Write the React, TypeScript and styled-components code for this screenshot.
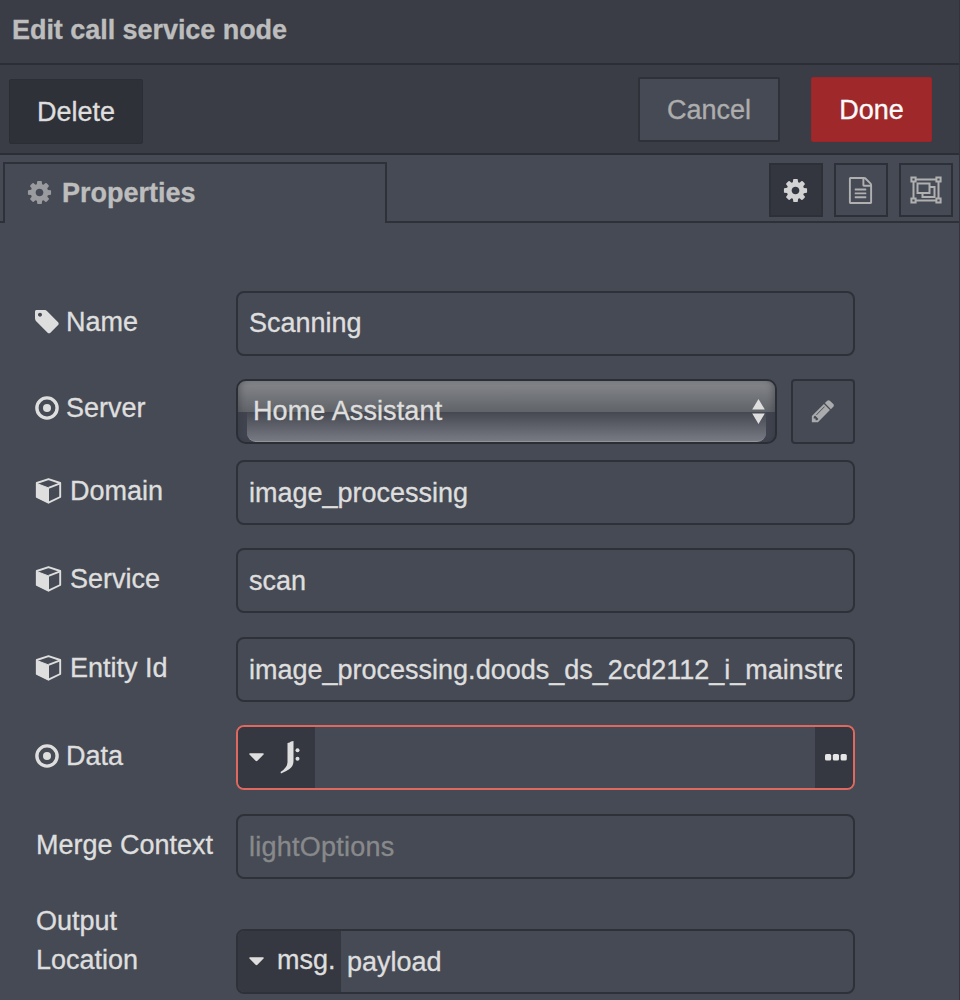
import React from 'react';
import styled, { createGlobalStyle, css } from 'styled-components';

const GlobalStyle = createGlobalStyle`
  *, *::before, *::after { box-sizing: border-box; }
  html, body { margin: 0; padding: 0; background: #464a54; }
  body { overflow: hidden; }
`;

const Tray = styled.main`
  display: flex;
  flex-direction: column;
  width: 960px;
  height: 1000px;
  overflow: hidden;
  background: #464a54;
  border-right: 1px solid #31343c;
  color: #dedede;
  font-family: 'Liberation Sans', Arial, sans-serif;
  font-size: 27px;
  -webkit-text-stroke: 0.35px currentColor;
`;

const TitleBar = styled.header`
  height: 65px;
  flex: none;
  padding-left: 12px;
  background: #3a3d46;
  border-bottom: 2px solid #2b2e35;
  color: #bdbdbd;
  font-weight: bold;
  letter-spacing: -0.05px;
  line-height: 60px;
`;

const Toolbar = styled.div`
  display: flex;
  align-items: flex-start;
  flex: none;
  height: 90px;
  padding: 12px 27px 0 9px;
  background: #3a3d46;
  border-bottom: 2px solid #2b2e35;
`;

const variants = {
  dark: css`
    width: 134px;
    margin: 2px auto 0 0;
    background: #2f3138;
    border: 1px solid #2b2e34;
    color: #dedede;
  `,
  plain: css`
    width: 142px;
    margin-right: 31px;
    background: #464a54;
    border: 2px solid #2e3138;
    color: #adadad;
  `,
  primary: css`
    width: 121px;
    background: #9f282b;
    border: 1px solid #9f2428;
    color: #fafafa;
  `,
};

const Button = styled.button<{ $variant: keyof typeof variants }>`
  display: flex;
  align-items: center;
  justify-content: center;
  height: 65px;
  padding: 2px 0 0;
  border-radius: 2px;
  font: inherit;
  ${({ $variant }) => variants[$variant]}
`;

const TabStrip = styled.div`
  display: flex;
  flex: none;
  height: 68px;
  padding-top: 7px;
`;

const StripEdge = styled.div`
  width: 3px;
  border-bottom: 2px solid #2e3138;
`;

const Tab = styled.div`
  display: flex;
  align-items: center;
  gap: 9px;
  width: 384px;
  padding: 0 0 1px 21px;
  border: 2px solid #2e3138;
  border-bottom: 0;
  color: #bdbdbd;
  font-weight: bold;

  svg { color: #9a9b9f; margin-bottom: 2px; }
`;

const TabTools = styled.div`
  display: flex;
  flex: 1;
  justify-content: flex-end;
  gap: 11px;
  padding: 1px 6px 0 0;
  border-bottom: 2px solid #2e3138;
`;

const TabTool = styled.button<{ $active?: boolean }>`
  display: flex;
  align-items: center;
  justify-content: center;
  width: 54px;
  height: 54px;
  padding: 0 2px 0 0;
  border: 2px solid #2d3037;
  background: ${({ $active }) => ($active ? '#33363e' : '#464a54')};
  color: ${({ $active }) => ($active ? '#d2d2d2' : '#b0b0b1')};

  &:last-child { padding-right: 0; }
`;

const Form = styled.form`
  display: flex;
  flex-direction: column;
  padding: 68px 104px 0 35px;
`;

const Row = styled.div<{ $gap?: number }>`
  display: flex;
  align-items: flex-end;
  margin-top: ${({ $gap = 24 }) => $gap}px;
`;

const Label = styled.label<{ $lift?: number; $gap?: number }>`
  display: flex;
  align-items: center;
  gap: ${({ $gap = 7 }) => $gap}px;
  flex: none;
  width: 201px;
  padding: 0 10px ${({ $lift = 14 }) => $lift}px 1px;
  line-height: 39px;

  svg { margin: 0 0 1px -1px; }
`;

const Field = styled.div<{ $error?: boolean; $muted?: boolean }>`
  display: flex;
  flex: 1;
  min-width: 0;
  height: 65px;
  border: 2px solid ${({ $error }) => ($error ? '#e0685f' : '#2e3138')};
  border-radius: 8px;
  overflow: hidden;
  color: ${({ $muted }) => ($muted ? '#88898b' : '#dedede')};
  letter-spacing: ${({ $muted }) => ($muted ? '0.25px' : 'normal')};
`;

const Value = styled.span<{ $inset?: number; $line?: number }>`
  flex: 1;
  min-width: 0;
  margin: 0 11px 0 ${({ $inset = 11 }) => $inset}px;
  overflow: hidden;
  line-height: ${({ $line = 62 }) => $line}px;
  white-space: nowrap;
`;

const TypeButton = styled.div<{ $width: number }>`
  display: flex;
  align-items: center;
  flex: none;
  width: ${({ $width }) => $width}px;
  padding-left: 11px;
  background: #353840;
`;

const TypeName = styled.span`
  margin-left: 13px;
  padding-bottom: 3px;
`;

const Expand = styled.div`
  display: flex;
  align-items: center;
  justify-content: center;
  width: 38px;
  margin-left: auto;
  padding-left: 4px;
  background: #353840;
`;

const Select = styled.div`
  display: flex;
  align-items: center;
  justify-content: space-between;
  width: 541px;
  height: 65px;
  padding: 0 10px 0 15px;
  border: 2px solid #2b2e35;
  border-radius: 10px;
  background:
    linear-gradient(#85878b, #606368) 0 0 / 100% 31px no-repeat,
    #414550;
  box-shadow: inset 5px 0 6px -3px rgba(50, 53, 62, 0.45), inset -5px 0 6px -3px rgba(50, 53, 62, 0.45);
  letter-spacing: 0.12px;
  position: relative;
  isolation: isolate;
  overflow: hidden;

  &::before {
    content: '';
    position: absolute;
    z-index: -1;
    left: 9px;
    right: 9px;
    top: 31px;
    bottom: 0;
    border-radius: 0 0 9px 9px;
    background: linear-gradient(#454850, #777a82);
    border-bottom: 1px solid #92949a;
  }
`;

const EditButton = styled.button`
  display: flex;
  align-items: center;
  justify-content: center;
  width: 64px;
  height: 65px;
  margin-left: 14px;
  padding: 0 1px 2px 0;
  border: 2px solid #2e3138;
  border-radius: 4px;
  background: #464a54;
  color: #aaabac;
`;

const Glyph = ({ d, size = 27 }: { d: string; size?: number }) => (
  <svg width={size} height={size} viewBox="0 0 1792 1792" fill="currentColor">
    <path d={d} />
  </svg>
);

const COG =
  'M1152 896q0-106-75-181t-181-75-181 75-75 181 75 181 181 75 181-75 75-181zm512-109v222q0 12-8 23t-20 13l-185 28q-19 54-39 91 35 50 107 138 10 12 10 25t-9 23q-27 37-99 108t-94 71q-12 0-26-9l-138-108q-44 23-91 38-16 136-29 186-7 28-36 28h-222q-14 0-24.500-8.500t-11.500-21.500l-28-184q-49-16-90-37l-141 107q-10 9-25 9-14 0-25-11-126-114-165-168-7-10-7-23 0-12 8-23 15-21 51-66.500t54-70.500q-27-50-41-99l-183-27q-13-2-21-12.500t-8-23.500v-222q0-12 8-23t19-13l186-28q14-46 39-92-40-57-107-138-10-12-10-24 0-10 9-23 26-36 98.500-107.500t94.500-71.500q13 0 26 10l138 107q44-23 91-38 16-136 29-186 7-28 36-28h222q14 0 24.500 8.500t11.500 21.500l28 184q49 16 90 37l142-107q9-9 24-9 13 0 25 10 129 119 165 170 7 8 7 22 0 12-8 23-15 21-51 66.500t-54 70.500q26 50 41 98l183 28q13 2 21 12.500t8 23.500z';
const FILE =
  'M1596 380q28 28 48 76t20 88v1152q0 40-28 68t-68 28h-1344q-40 0-68-28t-28-68v-1600q0-40 28-68t68-28h896q40 0 88 20t76 48zm-444-244v376h376q-10-29-22-41l-313-313q-12-12-41-22zm384 1528v-1024h-416q-40 0-68-28t-28-68v-416h-768v1536h1280zm-1024-864q0-14 9-23t23-9h704q14 0 23 9t9 23v64q0 14-9 23t-23 9h-704q-14 0-23-9t-9-23v-64zm736 224q14 0 23 9t9 23v64q0 14-9 23t-23 9h-704q-14 0-23-9t-9-23v-64q0-14 9-23t23-9h704zm0 256q14 0 23 9t9 23v64q0 14-9 23t-23 9h-704q-14 0-23-9t-9-23v-64q0-14 9-23t23-9h704z';
const TAG =
  'M576 448q0-53-37.500-90.500t-90.500-37.500-90.500 37.500-37.500 90.500 37.500 90.500 90.500 37.500 90.500-37.500 37.500-90.500zm1067 576q0 53-37 90l-491 492q-39 37-91 37-53 0-90-37l-715-716q-38-37-64.500-101t-26.500-117v-416q0-52 38-90t90-38h416q53 0 117 26.500t102 64.500l715 714q37 39 37 91z';
const PENCIL =
  'M491 1536l91-91-235-235-91 91v107h128v128h107zm523-928q0-22-22-22-10 0-17 7l-542 542q-7 7-7 17 0 22 22 22 10 0 17-7l542-542q7-7 7-17zm-54-192l416 416-832 832h-416v-416zm683 96q0 53-37 90l-166 166-416-416 166-165q36-38 90-38 53 0 91 38l235 234q37 39 37 91z';

const TagIcon = () => (
  <svg width="24" height="24" viewBox="128 148 1536 1536" fill="currentColor">
    <path d={TAG} />
  </svg>
);

const TargetIcon = () => (
  <svg width="24" height="24" viewBox="0 0 24 24">
    <circle cx="12" cy="12" r="10.1" fill="none" stroke="currentColor" strokeWidth="3.4" />
    <circle cx="12" cy="12" r="4" fill="currentColor" />
  </svg>
);

const CubeIcon = () => (
  <svg width="27" height="26" viewBox="0 0 27 26" strokeLinejoin="round">
    <path d="M13.500 1.200 25.200 5V19L13.500 24.700 1.800 19V5z" fill="none" stroke="currentColor" strokeWidth="1.900" />
    <path d="M1.800 5.500 13.500 9.900V24.700L1.800 19z" fill="currentColor" stroke="currentColor" />
    <path d="M13.500 9.900 25.200 5.400" stroke="currentColor" strokeWidth="1.900" />
  </svg>
);

const GroupIcon = () => (
  <svg width="32" height="28" viewBox="0 0 32 28" fill="none" stroke="currentColor" strokeWidth="2">
    <path d="M6 3.500H26M6 24.500H26M3.500 6V22M28.500 6V22" />
    <path d="M1.400 1.400h4.200v4.200H1.400zM26.400 1.400h4.200v4.200h-4.200zM1.400 22.400h4.200v4.200H1.400zM26.400 22.400h4.200v4.200h-4.200z" />
    <path d="M7.500 7.500h12v9.500h-12zM19.500 11h5v10h-12v-4" />
  </svg>
);

const CaretIcon = () => (
  <svg width="15" height="9" viewBox="0 0 16 9" fill="currentColor">
    <path d="M1 0H15Q16.300 0 15.500 1.200L9 8Q8 9 7 8L.5 1.200Q-.3 0 1 0z" />
  </svg>
);

const JsonataMark = styled.svg`
  margin: 0 0 1px 16px;
`;

const JsonataIcon = () => (
  <JsonataMark width="20" height="33" viewBox="0 0 20 33" fill="currentColor">
    <path d="M7.500 2Q10 1.800 11 .5L13.500 0V20Q13.500 25 9.500 28 6 30.500 1 32.500L.5 31Q7.500 26.500 7.500 21z" />
    <circle cx="17.500" cy="9.200" r="2" />
    <circle cx="17.500" cy="17.800" r="2" />
  </JsonataMark>
);

const StepperIcon = () => (
  <svg width="13" height="25" viewBox="0 0 13 25" fill="currentColor">
    <path d="M6.500 0 12.800 10.500H.2zM.2 14.500H12.800L6.500 25z" />
  </svg>
);

const DotsIcon = () => (
  <svg width="22" height="7" viewBox="0 0 22 7" fill="#e6e6e6">
    <rect width="6.200" height="6.500" rx="1.600" />
    <rect x="7.800" width="6.200" height="6.500" rx="1.600" />
    <rect x="15.600" width="6.200" height="6.500" rx="1.600" />
  </svg>
);

export default function App() {
  return (
    <Tray>
      <GlobalStyle />
      <TitleBar>Edit call service node</TitleBar>
      <Toolbar>
        <Button $variant="dark">Delete</Button>
        <Button $variant="plain">Cancel</Button>
        <Button $variant="primary">Done</Button>
      </Toolbar>
      <TabStrip>
        <StripEdge />
        <Tab>
          <Glyph d={COG} />
          Properties
        </Tab>
        <TabTools>
          <TabTool $active><Glyph d={COG} /></TabTool>
          <TabTool><Glyph d={FILE} /></TabTool>
          <TabTool><GroupIcon /></TabTool>
        </TabTools>
      </TabStrip>
      <Form>
        <Row $gap={0}>
          <Label><TagIcon />Name</Label>
          <Field><Value $line={60}>Scanning</Value></Field>
        </Row>
        <Row $gap={23}>
          <Label $lift={16}><TargetIcon />Server</Label>
          <Select>Home Assistant<StepperIcon /></Select>
          <EditButton type="button"><Glyph d={PENCIL} size={26} /></EditButton>
        </Row>
        <Row $gap={16}>
          <Label $gap={8}><CubeIcon />Domain</Label>
          <Field><Value>image_processing</Value></Field>
        </Row>
        <Row $gap={23}>
          <Label $gap={8}><CubeIcon />Service</Label>
          <Field><Value>scan</Value></Field>
        </Row>
        <Row>
          <Label $gap={8}><CubeIcon />Entity Id</Label>
          <Field><Value>image_processing.doods_ds_2cd2112_i_mainstream</Value></Field>
        </Row>
        <Row $gap={23}>
          <Label><TargetIcon />Data</Label>
          <Field $error>
            <TypeButton $width={77}><CaretIcon /><JsonataIcon /></TypeButton>
            <Expand><DotsIcon /></Expand>
          </Field>
        </Row>
        <Row>
          <Label>Merge Context</Label>
          <Field $muted><Value>lightOptions</Value></Field>
        </Row>
        <Row $gap={23}>
          <Label>Output Location</Label>
          <Field>
            <TypeButton $width={103}><CaretIcon /><TypeName>msg.</TypeName></TypeButton>
            <Value $inset={6}>payload</Value>
          </Field>
        </Row>
      </Form>
    </Tray>
  );
}
